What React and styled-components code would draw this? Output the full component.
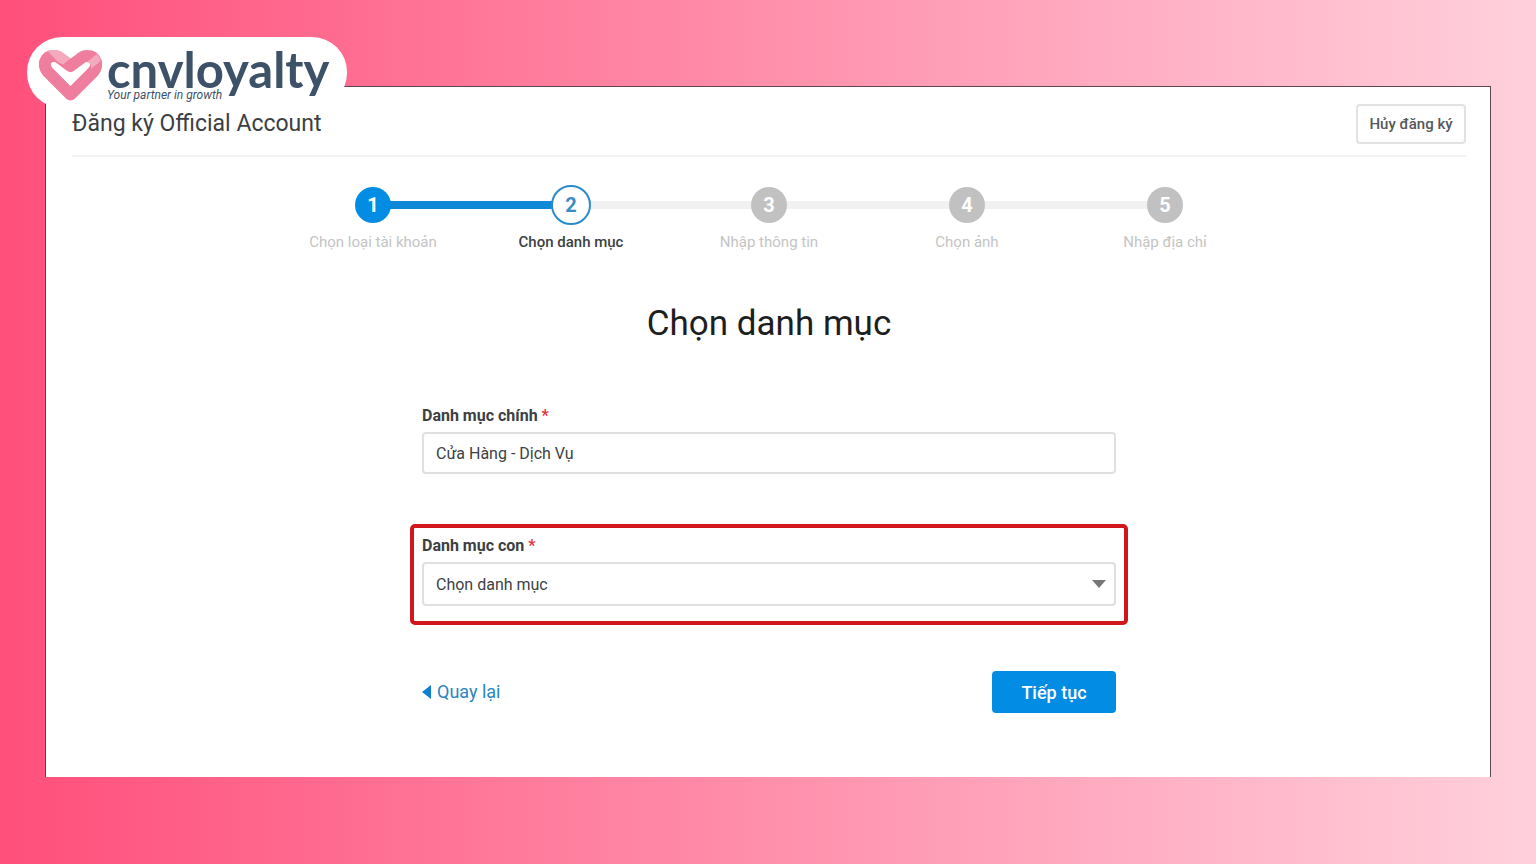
import React from "react";
import styled, { createGlobalStyle, css } from "styled-components";

const GlobalStyle = createGlobalStyle`
  *, *::before, *::after { box-sizing: border-box; }
  body {
    margin: 0;
    font-family: Roboto, "Liberation Sans", sans-serif;
    color: #3c3f43;
  }
  h1, h2, p, ol { margin: 0; padding: 0; font-weight: 400; }
  button, input, select { font-family: inherit; }
`;

const Page = styled.div`
  position: relative;
  display: flex;
  min-height: 100vh;
  padding: 86px 45px 87px;
  background: linear-gradient(90deg, #ff4f7b 0%, #ffd0dc 100%);
`;

const Brand = styled.div`
  position: absolute;
  top: 37px;
  left: 27px;
  display: flex;
  gap: 5px;
  width: 320px;
  height: 71px;
  padding: 11px 0 0 12px;
  border-radius: 35px;
  background: #fff;
`;

const Heart = styled.svg`
  width: 63px;
  height: 54px;
`;

const Wordmark = styled.div`
  display: flex;
  flex-direction: column;
`;

const BrandName = styled.span`
  font: 700 49px/42px Lato, sans-serif;
  color: #3d5168;
`;

const Tagline = styled.span`
  font: italic 400 12px/10px Roboto, sans-serif;
  color: #3d5168;
`;

const Panel = styled.main`
  flex: 1;
  min-width: 0;
  padding: 17px 24px 0 26px;
  border: solid #5d4650;
  border-width: 1px 1px 0;
  background: #fff;
`;

const Header = styled.header`
  display: flex;
  align-items: center;
  justify-content: space-between;
  padding-bottom: 11px;
  border-bottom: 2px solid #f1f3f4;
`;

const Title = styled.h1`
  font-size: 23px;
  line-height: 32px;
`;

const Button = styled.button`
  border-radius: 4px;
  font-weight: 500;
  cursor: pointer;
  ${({ $primary }) =>
    $primary
      ? css`
          width: 124px;
          height: 42px;
          border: 0;
          background: #038ce4;
          color: #fff;
          font-size: 18px;
        `
      : css`
          width: 110px;
          height: 40px;
          padding: 0;
          border: 2px solid #e2e2e2;
          background: #fff;
          color: #55585c;
          font-size: 15px;
        `}
`;

const Steps = styled.ol`
  display: flex;
  max-width: 990px;
  margin: 28px auto 0;
  list-style: none;
`;

const Step = styled.li`
  position: relative;
  flex: 1;
  display: flex;
  flex-direction: column;
  align-items: center;
  gap: 6px;
  font-size: 15px;
  line-height: 22px;
  font-weight: ${({ $state }) => ($state === "current" ? 500 : 400)};
  color: ${({ $state }) => ($state === "current" ? "#3c3f43" : "#c4c4c4")};

  &:not(:first-child)::before {
    content: "";
    position: absolute;
    top: 16px;
    right: 50%;
    width: 100%;
    height: 8px;
    background: ${({ $state }) => ($state === "current" ? "#0f88d8" : "#f1f1f1")};
  }
`;

const Marker = styled.span`
  z-index: 1;
  display: flex;
  align-items: center;
  justify-content: center;
  width: 36px;
  height: 36px;
  margin: 2px;
  border-radius: 50%;
  font-size: 20px;
  font-weight: 700;
  background: #c1c1c1;
  color: #fff;
  ${({ $state }) => $state === "done" && css`background: #038ce4;`}
  ${({ $state }) =>
    $state === "current" &&
    css`
      width: 40px;
      height: 40px;
      margin: 0;
      border: 2px solid #2b8ccc;
      background: #fff;
      color: #3b8cc6;
    `}
`;

const Heading = styled.h2`
  margin-top: 48px;
  text-align: center;
  font-size: 35px;
  line-height: 46px;
  color: #1d1e20;
`;

const Form = styled.form`
  max-width: 718px;
  margin: 47px auto 0;
`;

const Field = styled.div`
  padding: 7px 8px 15px;
  border: 4px solid ${({ $highlight }) => ($highlight ? "#cf171c" : "transparent")};
  border-radius: 5px;

  &:not(:first-child) {
    margin-top: 31px;
  }
`;

const Label = styled.label`
  display: block;
  padding-bottom: 5px;
  font-size: 16px;
  line-height: 22px;
  font-weight: 700;
`;

const Required = styled.span`
  color: #e5343a;
`;

const control = css`
  display: block;
  width: 100%;
  padding: 0 12px;
  border: 2px solid #e0e0e0;
  border-radius: 4px;
  background: #fff;
  color: #3c3f43;
  font-size: 16px;
`;

const TextInput = styled.input`
  ${control}
  height: 42px;
`;

const SelectWrap = styled.div`
  display: grid;
  align-items: center;

  & > * {
    grid-area: 1 / 1;
  }
`;

const Select = styled.select`
  ${control}
  height: 44px;
  appearance: none;
`;

const Caret = styled.svg`
  justify-self: end;
  width: 14px;
  height: 8px;
  margin-right: 10px;
  pointer-events: none;
`;

const Actions = styled.div`
  display: flex;
  align-items: center;
  justify-content: space-between;
  padding: 46px 12px 24px;
`;

const BackLink = styled.a`
  display: flex;
  align-items: center;
  gap: 6px;
  color: #2a86c5;
  font-size: 18px;
  line-height: 24px;
  text-decoration: none;
`;

const STEPS = [
  { label: "Chọn loại tài khoản", state: "done" },
  { label: "Chọn danh mục", state: "current" },
  { label: "Nhập thông tin", state: "todo" },
  { label: "Chọn ảnh", state: "todo" },
  { label: "Nhập địa chỉ", state: "todo" },
];

function Logo() {
  return (
    <Brand>
      <Heart viewBox="0 0 63 54" aria-hidden="true">
        <path
          d="M31.5 46.500 L9 24 C3 17 6 8 15 8 C18 8 20 9 22 11 L31.5 18 L41 11 C43 9 45 8 48 8 C57 8 60 17 54 24 Z"
          fill="none"
          stroke="#ef7e9e"
          strokeWidth="12"
          strokeLinejoin="round"
        />
        <path d="M9 3.500 C14 1 21 2 25 5.500 L31.500 10.500 L24 16.500 L19 14 Z" fill="#f4a9bd" />
        <path d="M58 6 C60 8 61 10 61.500 13 L52 21 C53 18 51 15 48 14 Z" fill="#f4a9bd" />
      </Heart>
      <Wordmark>
        <BrandName>cnvloyalty</BrandName>
        <Tagline>Your partner in growth</Tagline>
      </Wordmark>
    </Brand>
  );
}

export default function App() {
  return (
    <>
      <GlobalStyle />
      <Page>
        <Panel>
          <Header>
            <Title>Đăng ký Official Account</Title>
            <Button type="button">Hủy đăng ký</Button>
          </Header>
          <Steps>
            {STEPS.map(({ label, state }, i) => (
              <Step key={label} $state={state} aria-current={state === "current" ? "step" : undefined}>
                <Marker $state={state}>{i + 1}</Marker>
                {label}
              </Step>
            ))}
          </Steps>
          <Heading>Chọn danh mục</Heading>
          <Form onSubmit={(e) => e.preventDefault()}>
            <Field>
              <Label htmlFor="main-category">
                Danh mục chính <Required>*</Required>
              </Label>
              <TextInput id="main-category" type="text" defaultValue="Cửa Hàng - Dịch Vụ" />
            </Field>
            <Field $highlight>
              <Label htmlFor="sub-category">
                Danh mục con <Required>*</Required>
              </Label>
              <SelectWrap>
                <Select id="sub-category" defaultValue="">
                  <option value="">Chọn danh mục</option>
                </Select>
                <Caret viewBox="0 0 14 8" aria-hidden="true">
                  <path d="M0 0h14L7 8z" fill="#777" />
                </Caret>
              </SelectWrap>
            </Field>
            <Actions>
              <BackLink href="#back">
                <svg width="9" height="14" viewBox="0 0 9 14" aria-hidden="true">
                  <path d="M9 0v14L0 7z" fill="#0f7fd0" />
                </svg>
                Quay lại
              </BackLink>
              <Button type="submit" $primary>
                Tiếp tục
              </Button>
            </Actions>
          </Form>
        </Panel>
        <Logo />
      </Page>
    </>
  );
}
